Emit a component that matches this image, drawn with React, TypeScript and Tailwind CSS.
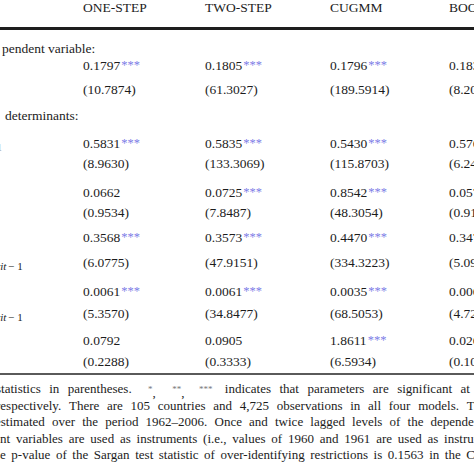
import React from "react";

const STAR = "text-[12.5px] leading-none text-[#7c7ce6] align-[1px] ml-[1px]";

type Cell = [string, boolean?];
type Row = { cls: string; label?: React.ReactNode; cells: Cell[] };

const sub = (
  <span className="text-[11px] italic align-[-3px] ml-[-4px] whitespace-nowrap">
    rit<span className="not-italic ml-[1.5px]">−</span>
    <span className="not-italic ml-[3px]">1</span>
  </span>
);

const rows: Row[] = [
  { cls: "mt-[1px]", cells: [["0.1797", true], ["0.1805", true], ["0.1796", true], ["0.1832", true]] },
  { cls: "mt-[8px]", cells: [["(10.7874)"], ["(61.3027)"], ["(189.5914)"], ["(8.2017)"]] },
];

const rows2: Row[] = [
  {
    cls: "mt-[12px]",
    label: <span className="text-[10px] text-[#999] ml-[-3px] align-[-3px]">1</span>,
    cells: [["0.5831", true], ["0.5835", true], ["0.5430", true], ["0.5760", true]],
  },
  { cls: "mt-[4px]", cells: [["(8.9630)"], ["(133.3069)"], ["(115.8703)"], ["(6.2438)"]] },
  { cls: "mt-[13px]", cells: [["0.0662"], ["0.0725", true], ["0.8542", true], ["0.0571"]] },
  { cls: "mt-[4px]", cells: [["(0.9534)"], ["(7.8487)"], ["(48.3054)"], ["(0.9127)"]] },
  { cls: "mt-[9px]", cells: [["0.3568", true], ["0.3573", true], ["0.4470", true], ["0.3471", true]] },
  { cls: "mt-[9px]", label: sub, cells: [["(6.0775)"], ["(47.9151)"], ["(334.3223)"], ["(5.0914)"]] },
  { cls: "mt-[13px]", cells: [["0.0061", true], ["0.0061", true], ["0.0035", true], ["0.0060", true]] },
  { cls: "mt-[6px]", label: sub, cells: [["(5.3570)"], ["(34.8477)"], ["(68.5053)"], ["(4.7225)"]] },
  { cls: "mt-[11px]", cells: [["0.0792"], ["0.0905"], ["1.8611", true], ["0.0262"]] },
  { cls: "mt-[5px]", cells: [["(0.2288)"], ["(0.3333)"], ["(6.5934)"], ["(0.1031)"]] },
];

const GRID = "grid grid-cols-[83px_122px_125px_119px_120px] h-[16px] leading-[16px] whitespace-nowrap";

function TableRow({ r }: { r: Row }) {
  return (
    <div className={`${GRID} ${r.cls}`}>
      <div>{r.label}</div>
      {r.cells.map((c, i) => (
        <div key={i}>
          {c[0]}
          {c[1] && <span className={STAR}>***</span>}
        </div>
      ))}
    </div>
  );
}

const FS = "text-[9px] text-[#777] align-[5px]";

function Words({ words, cls }: { words: React.ReactNode[]; cls: string }) {
  return (
    <div className={`flex justify-between whitespace-nowrap h-[16.6px] leading-[16.6px] ${cls}`}>
      {words.map((w, i) => (
        <span key={i}>{w}</span>
      ))}
    </div>
  );
}

export default function App() {
  return (
    <div className="w-[474px] h-[474px] overflow-hidden bg-white text-[#1c1c1c] font-['Liberation_Serif','Times_New_Roman',serif] text-[13.5px]">
      <div className={`${GRID} h-[10px] leading-[10px]`}>
        <div />
        <div>ONE-STEP</div>
        <div>TWO-STEP</div>
        <div>CUGMM</div>
        <div>BOOTSTRAP</div>
      </div>
      <div className="mt-[11px] h-[2.5px] w-full bg-[#1e1e1e]" />
      <div className="mt-[11.5px] h-[16px] leading-[16px] pl-[2px] whitespace-nowrap">pendent variable:</div>
      {rows.map((r, i) => (
        <TableRow key={i} r={r} />
      ))}
      <div className="mt-[10px] h-[16px] leading-[16px] pl-[5px] whitespace-nowrap">determinants:</div>
      {rows2.map((r, i) => (
        <TableRow key={i} r={r} />
      ))}
      <div className="mt-[2.5px] h-[2px] w-full bg-[#5a5a5a]" />
      <div className="mt-[6.5px] text-[13px]">
        <div className="flex whitespace-nowrap h-[16.6px] leading-[16.6px] ml-[-4px] w-[474px] justify-between">
          <span>statistics</span>
          <span>in</span>
          <span>parentheses.</span>
          <span className="ml-[8px]">
            <span className={FS}>*</span>,
          </span>
          <span className="ml-[8px]">
            <span className={FS}>**</span>,
          </span>
          <span className="ml-[6px]">
            <span className={FS}>***</span>
          </span>
          <span className="ml-[4px]">indicates</span>
          <span>that</span>
          <span>parameters</span>
          <span>are</span>
          <span>significant</span>
          <span>at</span>
        </div>
        <Words
          cls="ml-[-4px] w-[491px]"
          words={["respectively.", "There", "are", "105", "countries", "and", "4,725", "observations", "in", "all", "four", "models.", "The"]}
        />
        <Words
          cls="ml-[-5px] w-[489px]"
          words={["estimated", "over", "the", "period", "1962–2006.", "Once", "and", "twice", "lagged", "levels", "of", "the", "dependent"]}
        />
        <Words
          cls="ml-[0px] w-[505px]"
          words={["nt", "variables", "are", "used", "as", "instruments", "(i.e.,", "values", "of", "1960", "and", "1961", "are", "used", "as", "instruments"]}
        />
        <Words
          cls="ml-[0px] w-[517px]"
          words={["e", "p-value", "of", "the", "Sargan", "test", "statistic", "of", "over-identifying", "restrictions", "is", "0.1563", "in", "the", "CUGMM"]}
        />
      </div>
    </div>
  );
}
